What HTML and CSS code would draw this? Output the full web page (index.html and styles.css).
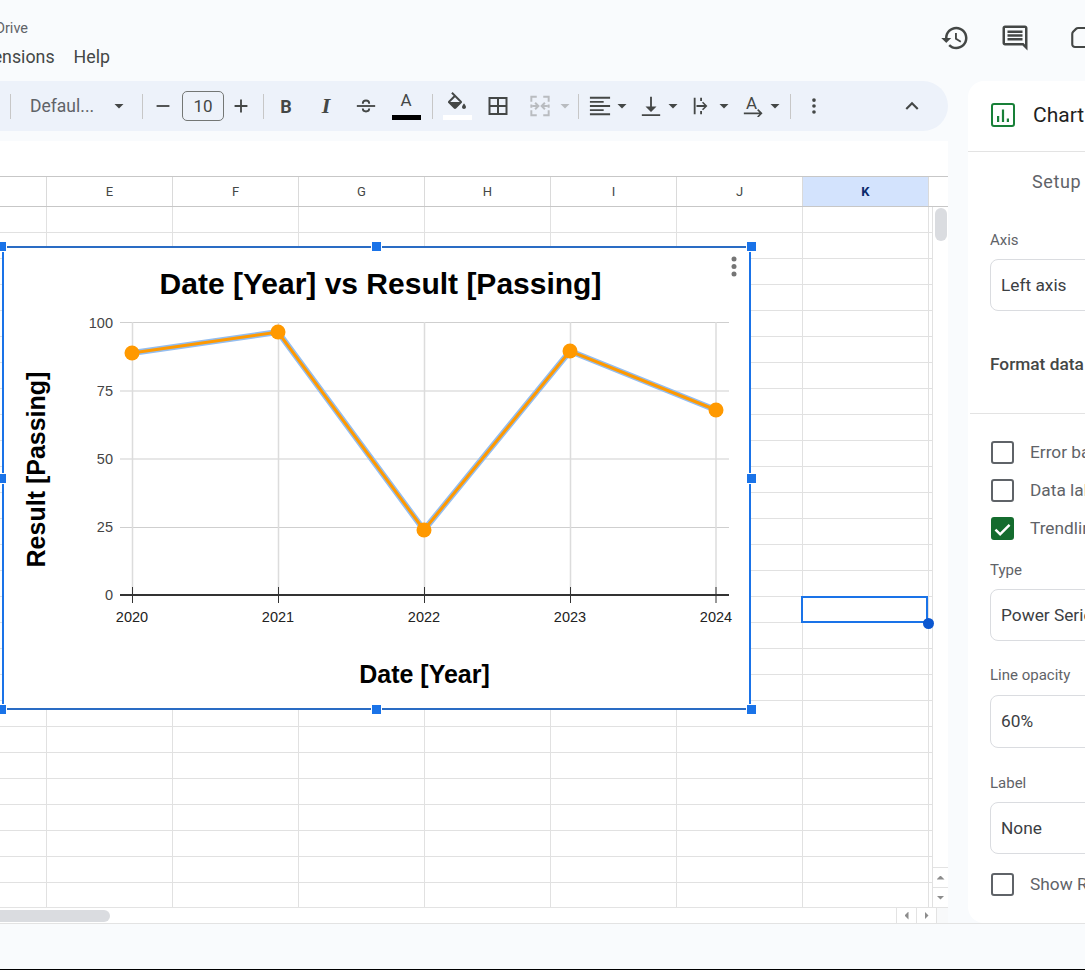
FILE: index.html
```html
<!DOCTYPE html>
<html lang="en">
<head>
    <meta charset="UTF-8">
    <title>Date [Year] vs Result [Passing]</title>
    <link rel="stylesheet" href="styles.css">
</head>
<body>
    <header class="top">
        <div class="doc-info">
            <div class="doc-status"><span>Drive</span></div>
            <nav class="menu-bar"><span>Extensions</span><span>Help</span></nav>
        </div>
        <div class="top-actions">
            <svg class="top-icon" viewBox="0 0 24 24"><path d="M13 3c-4.97 0-9 4.03-9 9H1l3.89 3.89.07.14L9 12H6c0-3.87 3.13-7 7-7s7 3.13 7 7-3.13 7-7 7c-1.93 0-3.68-.79-4.94-2.06l-1.42 1.42C8.27 19.99 10.51 21 13 21c4.97 0 9-4.03 9-9s-4.03-9-9-9zm-1 5v5l4.28 2.54.72-1.21-3.5-2.08V8H12z"/></svg>
            <svg class="top-icon" viewBox="0 0 24 24"><path d="M21.99 4c0-1.1-.89-2-1.99-2H4c-1.1 0-2 .9-2 2v12c0 1.1.9 2 2 2h14l4 4-.01-18zM20 4v13.17L18.83 16H4V4h16zM6 12h12v2H6zm0-3h12v2H6zm0-3h12v2H6z"/></svg>
            <svg class="top-icon" viewBox="0 0 24 24"><path class="meet-line" d="M24 4H14.5Q13.5 4 12.8 4.7L10.5 7Q9.8 7.7 9.8 8.7V17a2.2 2.2 0 0 0 2.2 2.2H24"/></svg>
        </div>
    </header>

    <main class="workspace">
        <section class="left-col">
            <div class="toolbar">
                <div class="sep sep-first"></div>
                <div class="font-select"><span>Defaul...</span><i class="caret"></i></div>
                <div class="sep"></div>
                <div class="tb-btn tb-minus"><svg viewBox="0 0 24 24"><path d="M5 11h14v2H5z"/></svg></div>
                <div class="size-box">10</div>
                <div class="tb-btn tb-plus"><svg viewBox="0 0 24 24"><path d="M19 13h-6v6h-2v-6H5v-2h6V5h2v6h6z"/></svg></div>
                <div class="sep"></div>
                <div class="tb-btn tb-first"><span class="glyph-bold">B</span></div>
                <div class="tb-btn"><span class="glyph-italic">I</span></div>
                <div class="tb-btn"><svg viewBox="0 0 24 24"><path class="line" d="M8.5 9.5C8.5 7.3 10 6 12 6s3.5 1.3 3.5 3.5M8.5 14.8C8.5 17 10 18 12 18s3.5-1 3.5-3.2"/><path d="M2 11h20v2H2z"/></svg></div>
                <div class="tb-btn tb-color"><span class="glyph-a">A</span><i class="color-bar bar-black"></i></div>
                <div class="sep sep-color"></div>
                <div class="tb-btn tb-fill"><svg class="bucket" viewBox="0 0 24 24"><path d="M16.56 8.94L7.62 0 6.21 1.41l2.38 2.38-5.15 5.15c-.59.59-.59 1.54 0 2.12l5.5 5.5c.29.29.68.44 1.06.44s.77-.15 1.06-.44l5.5-5.5c.59-.58.59-1.53 0-2.12zM5.21 10L10 5.21 14.79 10H5.21zM19 11.5s-2 2.17-2 3.5c0 1.1.9 2 2 2s2-.9 2-2c0-1.33-2-3.5-2-3.5z"/></svg><i class="color-bar bar-white"></i></div>
                <div class="tb-btn tb-borders"><svg viewBox="0 0 24 24"><path class="line" d="M3.5 4h17v16h-17zM12 4v16M3.5 12h17"/></svg></div>
                <div class="tb-btn tb-merge"><svg viewBox="0 0 24 24"><path class="line-off" d="M9 3.5H4V8M4 10.5v3M4 16v4.5h5M15 3.5h5V8M20 10.5v3M20 16v4.5h-5M5 12h4.5M7.5 9l3 3-3 3M19 12h-4.5M16.5 9l-3 3 3 3"/></svg></div>
                <i class="caret caret-off"></i>
                <div class="sep sep-merge"></div>
                <div class="tb-menus">
                    <div class="tb-menu"><svg viewBox="0 0 24 24"><path d="M1 2h22v2H1zM1 6.5h15v2H1zM1 11h22v2H1zM1 15.5h15v2H1zM1 20h22v2H1z"/></svg><i class="caret"></i></div>
                    <div class="tb-menu"><svg viewBox="0 0 24 24"><path d="M18 12.5h-5V2h-2v10.5H6l6 6zM2 21h20v2H2z"/></svg><i class="caret"></i></div>
                    <div class="tb-menu"><svg viewBox="0 0 24 24"><path d="M3 3h2v18H3zM10 3h2v3.5h-2zM10 17.5h2V21h-2zM6 11h8.5L12 8.5l1.2-1.2 4.700 4.700-4.700 4.700-1.200-1.200 2.500-2.500H6z"/></svg><i class="caret"></i></div>
                    <div class="tb-menu tb-rotate"><span class="glyph-rotate">A</span><svg viewBox="0 0 24 24"><path d="M2 19h17l-2.500-2.500 1.200-1.200 4.700 4.700-4.700 4.700-1.200-1.200 2.500-2.500H2z"/></svg><i class="caret"></i></div>
                </div>
                <div class="sep sep-rotate"></div>
                <div class="tb-btn tb-kebab"><svg viewBox="0 0 24 24"><circle cx="12" cy="5.500" r="2"/><circle cx="12" cy="12" r="2"/><circle cx="12" cy="18.500" r="2"/></svg></div>
                <div class="tb-btn tb-collapse"><svg viewBox="0 0 24 24"><path d="M7.41 15.41L12 10.83l4.59 4.58L18 14l-6-6-6 6z"/></svg></div>
            </div>

            <div class="formula-bar"></div>

            <div class="sheet">
                <div class="col-head">
                    <div class="col-cell col-corner"></div>
                    <div class="col-cell">E</div>
                    <div class="col-cell">F</div>
                    <div class="col-cell">G</div>
                    <div class="col-cell">H</div>
                    <div class="col-cell">I</div>
                    <div class="col-cell">J</div>
                    <div class="col-cell col-active">K</div>
                </div>
                <div class="sheet-body">
                    <div class="cells">
                        <div class="chart-frame">
                            <svg class="chart" viewBox="4 248 745 460">
                                <g class="grid-h">
                                    <line x1="120" x2="729" y1="322.5" y2="322.5"/>
                                    <line x1="120" x2="729" y1="391" y2="391"/>
                                    <line x1="120" x2="729" y1="459" y2="459"/>
                                    <line x1="120" x2="729" y1="527.5" y2="527.5"/>
                                </g>
                                <g class="grid-v">
                                    <line x1="132.5" x2="132.5" y1="322" y2="595"/>
                                    <line x1="278.5" x2="278.5" y1="322" y2="595"/>
                                    <line x1="424.5" x2="424.5" y1="322" y2="595"/>
                                    <line x1="570.5" x2="570.5" y1="322" y2="595"/>
                                    <line x1="716" x2="716" y1="322" y2="595"/>
                                </g>
                                <line class="axis" x1="120" x2="729" y1="595" y2="595"/>
                                <g class="ticks">
                                    <line x1="132.5" x2="132.5" y1="587" y2="603"/>
                                    <line x1="278.5" x2="278.5" y1="587" y2="603"/>
                                    <line x1="424.5" x2="424.5" y1="587" y2="603"/>
                                    <line x1="570.5" x2="570.5" y1="587" y2="603"/>
                                    <line x1="716" x2="716" y1="587" y2="603"/>
                                </g>
                                <polyline class="trend" points="132,353 278,332 424,530 570,351 716,410"/>
                                <polyline class="series" points="132,353 278,332 424,530 570,351 716,410"/>
                                <g class="dots">
                                    <circle cx="132" cy="353" r="7.5"/>
                                    <circle cx="278" cy="332" r="7.5"/>
                                    <circle cx="424" cy="530" r="7.5"/>
                                    <circle cx="570" cy="351" r="7.5"/>
                                    <circle cx="716" cy="410" r="7.5"/>
                                </g>
                                <text class="chart-title" x="380.5" y="294">Date [Year] vs Result [Passing]</text>
                                <text class="axis-title" x="424.5" y="683">Date [Year]</text>
                                <text class="axis-title" transform="translate(45 469.5) rotate(-90)">Result [Passing]</text>
                                <g class="y-labels">
                                    <text x="113" y="328">100</text>
                                    <text x="113" y="396">75</text>
                                    <text x="113" y="464">50</text>
                                    <text x="113" y="532">25</text>
                                    <text x="113" y="600">0</text>
                                </g>
                                <g class="x-labels">
                                    <text x="132" y="622">2020</text>
                                    <text x="278" y="622">2021</text>
                                    <text x="424" y="622">2022</text>
                                    <text x="570" y="622">2023</text>
                                    <text x="716" y="622">2024</text>
                                </g>
                                <g class="chart-kebab">
                                    <circle cx="734" cy="259" r="2.5"/>
                                    <circle cx="734" cy="266.5" r="2.5"/>
                                    <circle cx="734" cy="274" r="2.5"/>
                                </g>
                            </svg>
                            <i class="handle h-tl"></i>
                            <i class="handle h-tc"></i>
                            <i class="handle h-tr"></i>
                            <i class="handle h-ml"></i>
                            <i class="handle h-mr"></i>
                            <i class="handle h-bl"></i>
                            <i class="handle h-bc"></i>
                            <i class="handle h-br"></i>
                        </div>
                        <div class="active-cell"><i class="fill-handle"></i></div>
                    </div>
                    <div class="v-scroll">
                        <div class="v-thumb"></div>
                        <div class="v-btns">
                            <div class="scroll-btn"><i class="arrow-up"></i></div>
                            <div class="scroll-btn"><i class="arrow-down"></i></div>
                        </div>
                    </div>
                </div>
                <div class="h-scroll">
                    <div class="h-thumb"></div>
                    <div class="h-btn"><i class="arrow-left"></i></div>
                    <div class="h-btn"><i class="arrow-right"></i></div>
                    <div class="h-corner"></div>
                </div>
            </div>
        </section>

        <aside class="panel">
            <div class="panel-head">
                <svg class="chart-icon" viewBox="0 0 24 24"><rect x="1" y="1" width="22" height="22" rx="2"/><path d="M6 13h2.200v6H6zM10.900 6.500h2.200V19h-2.200zM15.800 15.500H18V19h-2.200z"/></svg>
                <span>Chart editor</span>
            </div>
            <div class="panel-tabs"><span>Setup</span></div>

            <div class="field-label first-label">Axis</div>
            <div class="select-box">Left axis</div>
            <div class="section-title">Format data point</div>
            <div class="panel-line"></div>

            <div class="check-list">
                <label class="check-row"><i class="check"></i>Error bars</label>
                <label class="check-row"><i class="check"></i>Data labels</label>
                <label class="check-row"><i class="check checked"><svg viewBox="0 0 24 24"><path d="M9 17.200L4.200 12.400 2 14.600 9 21.600 22 8.600l-2.200-2.200z"/></svg></i>Trendline</label>
            </div>

            <div class="field-label type-label">Type</div>
            <div class="select-box">Power Series</div>
            <div class="field-label opacity-label">Line opacity</div>
            <div class="select-box opacity-box">60%</div>
            <div class="field-label next-label">Label</div>
            <div class="select-box">None</div>
            <label class="check-row show-row"><i class="check"></i>Show R²</label>
        </aside>
    </main>

    <footer class="bottom"></footer>
</body>
</html>
```

FILE: styles.css
```css
* {
    box-sizing: border-box;
}

html, body {
    height: 100%;
}

body {
    margin: 0;
    width: 1085px;
    height: 970px;
    overflow: hidden;
    background-color: #f9fbfd;
    font-family: 'Roboto', sans-serif;
    color: #444746;
    display: flex;
    flex-direction: column;
}

i {
    display: block;
    font-style: normal;
}

/* top of the page */
.top {
    height: 81px;
    flex: none;
    display: flex;
}

.doc-info {
    width: 940px;
    flex: none;
    padding-top: 19px;
}

.doc-status {
    width: 28px;
    height: 20px;
    line-height: 20px;
    font-size: 14.5px;
    color: #5f6368;
    display: flex;
    justify-content: flex-end;
    white-space: nowrap;
}

.menu-bar {
    width: 110px;
    height: 20px;
    margin-top: 8px;
    line-height: 20px;
    font-size: 17.8px;
    display: flex;
    justify-content: flex-end;
    gap: 19px;
    white-space: nowrap;
}

.top-actions {
    display: flex;
    gap: 30px;
    margin-top: 23px;
}

.top-icon {
    width: 30px;
    height: 30px;
    flex: none;
    fill: #444746;
}

.meet-line {
    fill: none;
    stroke: #444746;
    stroke-width: 1.7;
}

/* main area */
.workspace {
    height: 842px;
    flex: none;
    display: flex;
}

.left-col {
    width: 948px;
    flex: none;
    display: flex;
    flex-direction: column;
}

.toolbar {
    height: 50px;
    flex: none;
    padding: 0 16px 0 10px;
    background-color: #edf2fa;
    border-radius: 0 25px 25px 0;
    display: flex;
    align-items: center;
}

.sep {
    width: 1px;
    height: 25px;
    flex: none;
    background-color: #c7c7c7;
}

.font-select {
    width: 131px;
    flex: none;
    padding: 0 18px 0 19px;
    font-size: 17.5px;
    color: #5f6368;
    display: flex;
    justify-content: space-between;
    align-items: center;
}

.caret {
    width: 10px;
    height: 5px;
    flex: none;
    background-color: #444746;
    clip-path: polygon(0 0, 100% 0, 50% 100%);
}

.caret-off {
    background-color: #b9bcc0;
}

.tb-btn {
    width: 40px;
    height: 40px;
    flex: none;
    position: relative;
    display: flex;
    align-items: center;
    justify-content: center;
}

.tb-btn svg {
    width: 22px;
    height: 22px;
    fill: #444746;
}

.tb-minus {
    width: 39px;
}

.tb-plus {
    width: 34px;
    margin-right: 5px;
}

.tb-first {
    margin-left: 2px;
}

.size-box {
    width: 42px;
    height: 30px;
    flex: none;
    border: 1px solid #747775;
    border-radius: 5px;
    text-align: center;
    line-height: 28px;
    font-size: 17px;
}

.glyph-bold {
    font-size: 18px;
    font-weight: 700;
}

.glyph-italic {
    font-family: 'Liberation Serif', serif;
    font-size: 22px;
    font-weight: 700;
    font-style: italic;
}

.glyph-a {
    margin-bottom: 12px;
    font-size: 17px;
}

.color-bar {
    position: absolute;
    left: 6px;
    top: 29px;
    width: 29px;
    height: 5px;
}

.bar-black {
    background-color: #000;
}

.bar-white {
    background-color: #fff;
}

.sep-color {
    margin-left: 6px;
    margin-right: 4px;
}

.tb-btn .bucket {
    width: 24px;
    height: 24px;
    margin-bottom: 4px;
}

.line {
    fill: none;
    stroke: #444746;
    stroke-width: 2;
}

.line-off {
    fill: none;
    stroke: #b9bcc0;
    stroke-width: 1.8;
}

.tb-btn.tb-borders svg {
    width: 24px;
    height: 24px;
}

.tb-borders {
    margin-left: 1px;
}

.tb-merge {
    margin-left: 2px;
}

.tb-btn.tb-merge svg {
    width: 26px;
    height: 26px;
}

.sep-merge {
    margin-left: 8px;
    margin-right: 10px;
}

.tb-menus {
    display: flex;
    gap: 13px;
}

.tb-menu {
    width: 38px;
    flex: none;
    position: relative;
    display: flex;
    align-items: center;
    gap: 6px;
}

.tb-menu svg {
    width: 22px;
    height: 22px;
    flex: none;
    fill: #444746;
}

.glyph-rotate {
    position: absolute;
    left: 4px;
    top: -2px;
    font-size: 17px;
}

.sep-rotate {
    margin-left: 10px;
    margin-right: 3px;
}

.tb-collapse {
    margin-left: auto;
}

.tb-btn.tb-collapse svg {
    width: 26px;
    height: 26px;
}

.formula-bar {
    height: 35px;
    flex: none;
    margin-top: 10px;
    background-color: #fff;
}

/* sheet */
.sheet {
    flex: 1;
    display: flex;
    flex-direction: column;
    background-color: #fff;
}

.col-head {
    height: 31px;
    flex: none;
    border-top: 1px solid #c7c7c7;
    border-bottom: 1px solid #c7c7c7;
    display: flex;
}

.col-cell {
    width: 126px;
    flex: none;
    border-right: 1px solid #dadada;
    text-align: center;
    line-height: 29px;
    font-size: 13px;
    color: #444746;
}

.col-corner {
    width: 47px;
}

.col-active {
    background-color: #d3e3fd;
    color: #0b2a6b;
    font-weight: 700;
}

.sheet-body {
    flex: 1;
    display: flex;
    min-height: 0;
}

.cells {
    width: 933px;
    flex: none;
    position: relative;
    border-right: 1px solid #e1e1e1;
    background-image: linear-gradient(to right, #e1e1e1 1px, transparent 1px), linear-gradient(to bottom, transparent 25px, #e1e1e1 25px);
    background-size: 126px 100%, 100% 26px;
    background-position: 46px 0, 0 0;
}

.chart-frame {
    position: absolute;
    left: 2px;
    top: 39px;
    width: 749px;
    height: 464px;
    background-color: #fff;
    border: 2px solid #1a73e8;
    border-top-color: #2a6cc4;
    border-bottom-color: #2a6cc4;
}

.chart {
    display: block;
    width: 745px;
    height: 460px;
}

.grid-h line {
    stroke: #cfcfcf;
    stroke-width: 1;
}

.grid-v line {
    stroke: #dcdcdc;
    stroke-width: 1.5;
}

.axis {
    stroke: #333;
    stroke-width: 2;
}

.ticks line {
    stroke: #333;
    stroke-width: 1;
}

.trend {
    fill: none;
    stroke: #93bdf0;
    stroke-width: 6;
}

.series {
    fill: none;
    stroke: #ff9900;
    stroke-width: 3;
}

.dots circle {
    fill: #ff9900;
}

.chart-kebab circle {
    fill: #757575;
}

.chart-title {
    font-family: 'Liberation Sans', sans-serif;
    font-size: 30px;
    font-weight: 700;
    text-anchor: middle;
    fill: #000;
}

.axis-title {
    font-family: 'Liberation Sans', sans-serif;
    font-size: 25px;
    font-weight: 700;
    text-anchor: middle;
    fill: #000;
}

.y-labels text {
    font-family: 'Liberation Sans', sans-serif;
    font-size: 14.5px;
    text-anchor: end;
    fill: #444;
}

.x-labels text {
    font-family: 'Liberation Sans', sans-serif;
    font-size: 14.5px;
    text-anchor: middle;
    fill: #222;
}

.handle {
    position: absolute;
    width: 9px;
    height: 9px;
    background-color: #1a73e8;
    box-shadow: 0 0 0 1px #fff;
}

.h-tl, .h-ml, .h-bl {
    left: -7px;
}

.h-tc, .h-bc {
    left: 368px;
}

.h-tr, .h-mr, .h-br {
    right: -7px;
}

.h-tl, .h-tc, .h-tr {
    top: -6px;
}

.h-ml, .h-mr {
    top: 226px;
}

.h-bl, .h-bc, .h-br {
    bottom: -6px;
}

.active-cell {
    position: absolute;
    left: 801px;
    top: 389px;
    width: 127px;
    height: 27px;
    border: 2px solid #1a73e8;
}

.fill-handle {
    position: absolute;
    right: -8px;
    bottom: -8px;
    width: 11px;
    height: 11px;
    border-radius: 50%;
    background-color: #0b57d0;
}

.v-scroll {
    flex: 1;
    padding-top: 1px;
    display: flex;
    flex-direction: column;
    align-items: center;
    justify-content: space-between;
}

.v-thumb {
    width: 12px;
    height: 33px;
    border-radius: 6px;
    background-color: #dadce0;
}

.v-btns {
    width: 100%;
}

.scroll-btn {
    height: 20px;
    border-top: 1px solid #e3e3e3;
    display: flex;
    align-items: center;
    justify-content: center;
}

.arrow-up, .arrow-down {
    width: 8px;
    height: 4px;
    background-color: #8c8c8c;
}

.arrow-up {
    clip-path: polygon(50% 0, 100% 100%, 0 100%);
}

.arrow-down {
    clip-path: polygon(0 0, 100% 0, 50% 100%);
}

.h-scroll {
    height: 16px;
    flex: none;
    border-top: 1px solid #e3e3e3;
    display: flex;
    align-items: center;
}

.h-thumb {
    width: 110px;
    height: 12px;
    margin-right: 786px;
    border-radius: 0 6px 6px 0;
    background-color: #dadce0;
}

.h-btn {
    width: 20px;
    height: 15px;
    border-left: 1px solid #e3e3e3;
    display: flex;
    align-items: center;
    justify-content: center;
}

.arrow-left, .arrow-right {
    width: 4px;
    height: 8px;
    background-color: #8c8c8c;
}

.arrow-left {
    clip-path: polygon(100% 0, 100% 100%, 0 50%);
}

.arrow-right {
    clip-path: polygon(0 0, 100% 50%, 0 100%);
}

.h-corner {
    width: 12px;
    height: 15px;
    border-left: 1px solid #e3e3e3;
    background-color: #f8f9fa;
}

/* side panel */
.panel {
    width: 400px;
    flex: none;
    margin-left: 20px;
    background-color: #fff;
    border-radius: 16px 0 0 16px;
    font-size: 17.3px;
}

.panel-head {
    height: 71px;
    padding: 0 0 0 23px;
    border-bottom: 1px solid #e3e3e3;
    display: flex;
    align-items: center;
    gap: 18px;
    font-size: 21px;
    line-height: 24px;
    color: #1f1f1f;
}

.panel-head span {
    margin-top: -2px;
}

.chart-icon {
    width: 24px;
    height: 24px;
    flex: none;
    margin-top: -2px;
    fill: #188038;
}

.chart-icon rect {
    fill: none;
    stroke: #188038;
    stroke-width: 2;
}

.panel-tabs {
    height: 78px;
    padding: 20px 0 0 64px;
    line-height: 20px;
    font-size: 18px;
    letter-spacing: 0.6px;
    color: #5f6368;
}

.field-label {
    height: 20px;
    margin-left: 22px;
    line-height: 20px;
    font-size: 15px;
    color: #5f6368;
}

.type-label {
    margin-top: 13px;
}

.opacity-label {
    margin-top: 24px;
}

.next-label {
    margin-top: 25px;
}

.select-box {
    width: 360px;
    height: 52px;
    margin: 9px 0 0 22px;
    padding-left: 10px;
    border: 1px solid #dadce0;
    border-radius: 8px;
    line-height: 51px;
    color: #3c4043;
}

.opacity-box {
    height: 53px;
    margin-top: 10px;
}

.section-title {
    height: 20px;
    margin: 43px 0 0 22px;
    line-height: 20px;
    font-weight: 500;
    color: #444746;
}

.panel-line {
    height: 1px;
    margin: 39px 0 0 2px;
    background-color: #e3e3e3;
}

.check-list {
    margin-top: 19px;
}

.check-row {
    height: 38px;
    margin-left: 23px;
    display: flex;
    align-items: center;
    gap: 16px;
    color: #5f6368;
}

.check {
    width: 23px;
    height: 23px;
    flex: none;
    border: 2px solid #5f6368;
    border-radius: 3px;
}

.checked {
    border-color: #146c2e;
    background-color: #146c2e;
}

.checked svg {
    display: block;
    width: 19px;
    height: 19px;
    fill: #fff;
}

.show-row {
    margin-top: 11px;
}

/* bottom bar */
.bottom {
    height: 47px;
    flex: none;
    border-top: 1px solid #e3e3e3;
    border-bottom: 1px solid #000;
}
```
